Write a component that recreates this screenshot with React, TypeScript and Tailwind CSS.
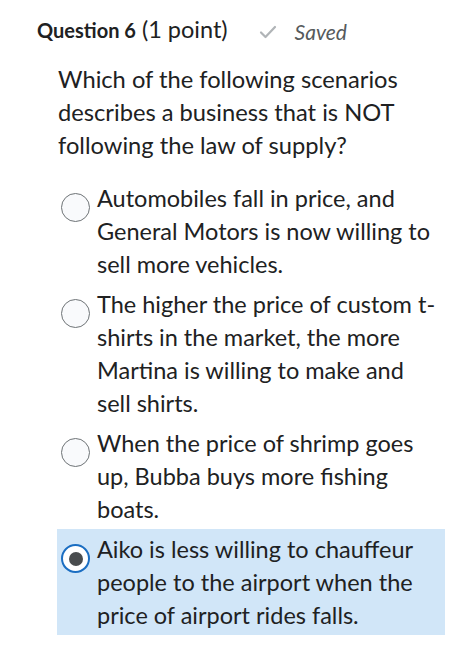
import React from 'react';

interface Option {
	id: number;
	text: string;
}

const options: Option[] = [
	{ id: 1, text: 'Automobiles fall in price, and General Motors is now willing to sell more vehicles.' },
	{ id: 2, text: 'The higher the price of custom t-shirts in the market, the more Martina is willing to make and sell shirts.' },
	{ id: 3, text: 'When the price of shrimp goes up, Bubba buys more fishing boats.' },
	{ id: 4, text: 'Aiko is less willing to chauffeur people to the airport when the price of airport rides falls.' },
];

const Radio: React.FC<{ checked: boolean }> = ({ checked }) => (
	<span
		className={`mt-[11px] flex h-[29px] w-[29px] shrink-0 items-center justify-center rounded-full ${
			checked ? 'border-[2.5px] border-[#1b6ec2] bg-white' : 'border-[1.5px] border-[#6e7376] bg-[#f9fafc]'
		}`}
	>
		{checked && <span className="h-[14px] w-[14px] rounded-full bg-[#494c4e]" />}
	</span>
);

export default function App() {
	const selected = 4;

	return (
		<div className="min-h-[647px] w-[474px] bg-white font-['Lato',sans-serif] text-[#202122]">
			{/* Header */}
			<div className="flex h-[30px] items-center pl-[37px] mt-[15px]">
				<span className="text-[20px] font-bold">Question 6</span>
				<span className="ml-[6px] text-[23.5px]">(1 point)</span>
				<svg className="ml-[31px] mt-[3px]" width="18" height="14" viewBox="0 0 18 14" fill="none">
					<path d="M2 7.5 L6.5 12 L16 2" stroke="#b0b4b7" strokeWidth="2.2" strokeLinecap="round" strokeLinejoin="round" />
				</svg>
				<span className="ml-[18px] mt-[3px] text-[21px] italic text-[#565a5c]">Saved</span>
			</div>

			{/* Question text */}
			<p className="mt-[18px] pl-[58px] pr-[60px] text-[23.7px] leading-[33px]">
				Which of the following scenarios describes a business that is NOT following the law of supply?
			</p>

			{/* Options */}
			<div className="mt-[16px] flex flex-col pl-[57px]">
				{options.map((opt) => (
					<label
						key={opt.id}
						className={`flex w-[388px] gap-[7px] pt-[4px] pb-[3px] pl-[4px] ${opt.id === selected ? 'bg-[#d1e6f8]' : ''}`}
					>
						<Radio checked={opt.id === selected} />
						<span className="w-[342px] text-[23.5px] leading-[33px]">{opt.text}</span>
					</label>
				))}
			</div>
		</div>
	);
}
